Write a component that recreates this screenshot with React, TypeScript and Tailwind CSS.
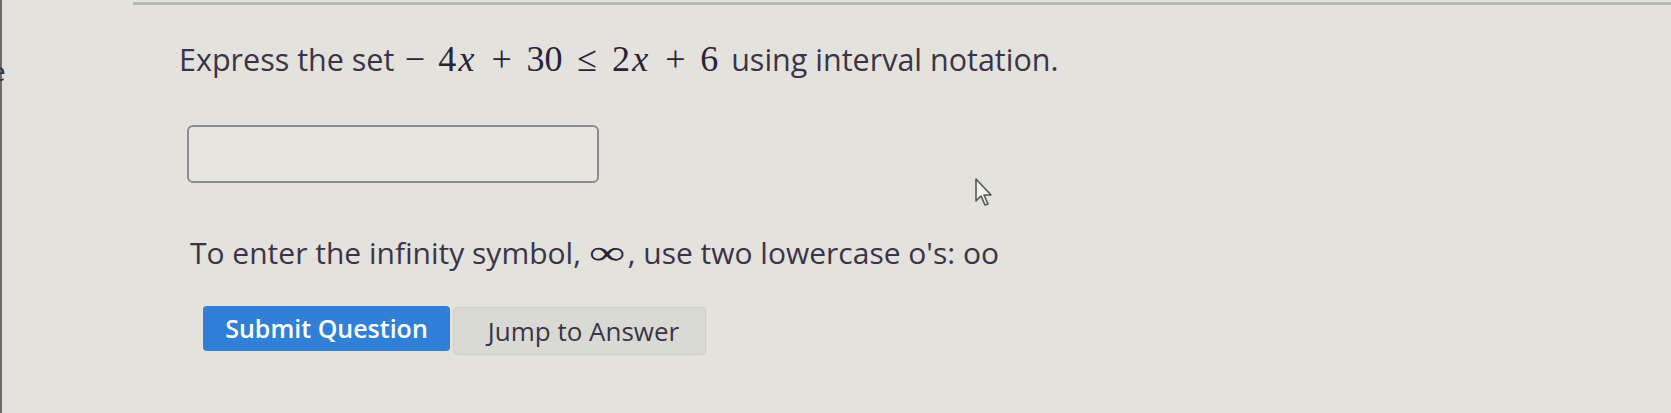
import React from 'react';

const sans = { fontFamily: '"Open Sans", "Noto Sans", sans-serif' };
const serif = { fontFamily: '"Liberation Serif", "DejaVu Serif", serif' };

function Cursor() {
  return (
    <svg className="absolute left-[974px] top-[177px]" width="22" height="30" viewBox="0 0 22 30">
      <path d="M2 2 L2 24 L7 19 L11 28 L14 27 L10 18 L17 18 Z" fill="#f2f2ee" stroke="#55555a" strokeWidth="1.6" strokeLinejoin="round" />
    </svg>
  );
}

// operator / glyph cells sized like KaTeX's Computer Modern metrics
function Op({ c }: { c: string }) {
  return <span className="inline-block w-[0.778em] mx-[0.3em] text-center">{c}</span>;
}

function X() {
  return <i className="inline-block w-[0.572em] text-center">x</i>;
}

export default function App() {
  return (
    <div className="relative w-full h-[413px] overflow-hidden bg-[#e3e2dc] text-[#3b3449]" style={sans}>
      <div className="ml-[133px] h-[3px] mt-[2px] bg-[#b9b9b5]" />
      <div className="absolute left-0 top-0 h-full w-[2px] bg-[#6d6a70]" />
      <span className="absolute left-[-9px] top-[56px] text-[26px] leading-[30px]">e</span>

      <div className="pl-[179px] pt-[32px]">
        <p className="text-[30.5px] leading-[44px] flex items-baseline whitespace-nowrap">
          <span>Express the set&nbsp;</span>
          <span className="text-[36px] text-[#2a2339]" style={serif}>
            <span className="inline-block w-[0.7em] mr-[0.3em] text-center">−</span>
            4<X />
            <Op c="+" />
            30
            <Op c="≤" />
            2<X />
            <Op c="+" />
            6
          </span>
          <span>&nbsp;&thinsp;using interval notation.</span>
        </p>

        <div className="mt-[44px] ml-[8px] w-[412px] h-[58px] rounded-[6px] border-2 border-[#8d8b93] bg-[#e6e5df]" />

        <p className="mt-[50px] ml-[11px] text-[30px] leading-[40px] whitespace-nowrap">
          To enter the infinity symbol,{' '}
          <span className="inline-block w-[39px]">
            <span className="inline-block origin-left scale-x-[1.5] text-[34px] text-[#2a2339]" style={serif}>∞</span>
          </span>
          , use two lowercase o's: oo
        </p>

        <div className="mt-[33px] ml-[24px] flex gap-[3px] items-start">
          <button className="h-[45px] w-[247px] rounded-[4px] bg-[#2f80d6] text-white text-[25px] font-semibold">
            Submit Question
          </button>
          <button className="h-[48px] w-[253px] mt-[1px] pl-[8px] rounded-[4px] bg-[#dadad5] border border-[#cfcfca] text-[26px] text-[#3b3449]">
            Jump to Answer
          </button>
        </div>
      </div>

      <Cursor />
    </div>
  );
}
